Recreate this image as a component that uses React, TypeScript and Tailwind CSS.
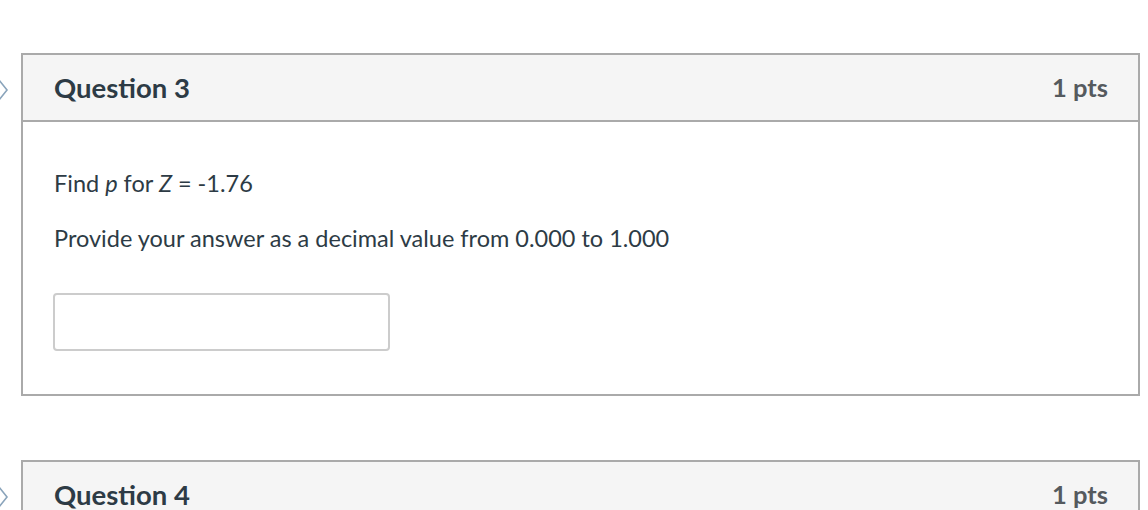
import React from "react";

function Chevron() {
  return (
    <svg
      className="absolute left-[-2px] top-[26px]"
      width="12"
      height="22"
      viewBox="0 0 12 22"
      fill="none"
    >
      <polyline points="1,1 9,11 1,21" stroke="#8aa4bb" strokeWidth="1.6" fill="none" />
    </svg>
  );
}

function Header({ title }: { title: string }) {
  return (
    <div className="flex h-[67px] items-center justify-between border-b-2 border-[#aaaaaa] bg-[#f5f5f5] pl-[31px] pr-[30px]">
      <h2 className="text-[27.5px] font-bold text-[#2d3b45]">{title}</h2>
      <span className="text-[25.5px] font-bold text-[#555a5e]">1 pts</span>
    </div>
  );
}

export default function App() {
  return (
    <div
      className="relative min-h-[510px] overflow-hidden bg-white pt-[53px]"
      style={{ fontFamily: "Lato, 'Noto Sans', sans-serif" }}
    >
      <div className="relative">
        <div className="ml-[21px] mr-[8px] border-2 border-[#aaaaaa] bg-white">
          <Header title="Question 3" />
          <div className="pl-[31px] pt-[46px] pb-[43px] text-[23.5px] leading-[30px] text-[#2d3b45]">
            <p>
              Find <i>p</i> for <i>Z</i> = -1.76
            </p>
            <p className="mt-[25px]">
              Provide your answer as a decimal value from 0.000 to 1.000
            </p>
            <input
              type="text"
              className="mt-[40px] ml-[-1px] block h-[58px] w-[337px] rounded-[4px] border-2 border-[#cccccc] bg-white"
            />
          </div>
        </div>
        <Chevron />
      </div>
      <div className="relative mt-[64px]">
        <div className="ml-[21px] mr-[8px] border-2 border-[#aaaaaa] bg-white">
          <Header title="Question 4" />
        </div>
        <Chevron />
      </div>
    </div>
  );
}
